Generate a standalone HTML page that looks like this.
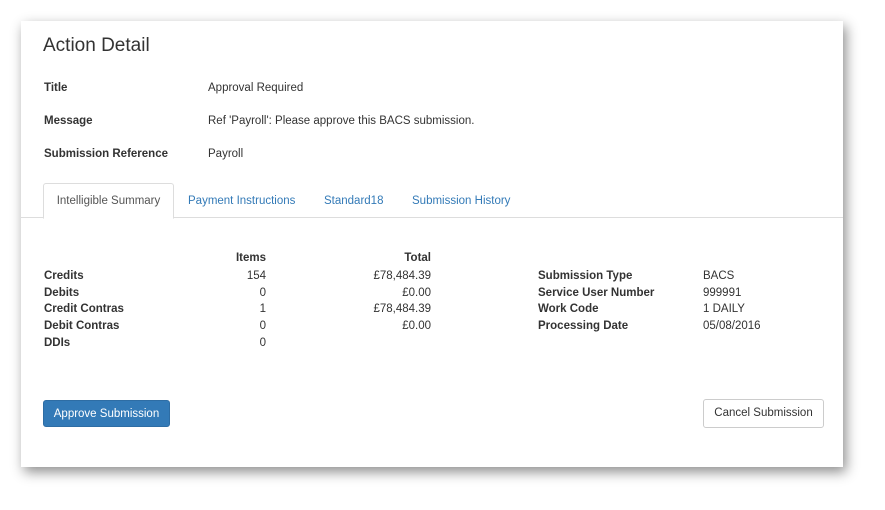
<!DOCTYPE html>
<html><head><style>
body{margin:0;width:885px;height:510px;background:#fff;font-family:"Liberation Sans",sans-serif;position:relative;overflow:hidden}
.card{position:absolute;left:21px;top:21px;width:822px;height:446px;background:#fff;box-shadow:3px 5px 12px rgba(0,0,0,.45)}
.a{position:absolute;font-size:11.5px;color:#333;white-space:nowrap}
.b{font-weight:bold}
.r{text-align:right}
.tab{position:absolute;top:184px;height:35px;line-height:35px;font-size:11.5px;color:#337ab7}
</style></head><body>
<div class="card"></div>
<div class="a" style="left:43px;top:35px;font-size:19px;color:#333">Action Detail</div>
<div class="a b" style="left:44px;top:82px">Title</div>
<div class="a" style="left:208px;top:82px">Approval Required</div>
<div class="a b" style="left:44px;top:115px">Message</div>
<div class="a" style="left:208px;top:115px">Ref 'Payroll': Please approve this BACS submission.</div>
<div class="a b" style="left:44px;top:148px">Submission Reference</div>
<div class="a" style="left:208px;top:148px">Payroll</div>
<div style="position:absolute;left:21px;top:217px;width:822px;height:1px;background:#ddd"></div>
<div class="tab" style="left:43px;width:129px;border:1px solid #ddd;border-bottom-color:#fff;background:#fff;border-radius:3px 3px 0 0;color:#555;text-align:center;top:183px;height:34px">Intelligible Summary</div>
<div class="tab" style="left:188px">Payment Instructions</div>
<div class="tab" style="left:324px">Standard18</div>
<div class="tab" style="left:412px">Submission History</div>
<div class="a b r" style="left:206px;width:60px;top:252px">Items</div>
<div class="a b r" style="left:330px;width:101px;top:252px">Total</div>
<div class="a b" style="left:44px;top:268px;line-height:16.7px">Credits<br>Debits<br>Credit Contras<br>Debit Contras<br>DDIs</div>
<div class="a r" style="left:206px;width:60px;top:268px;line-height:16.7px">154<br>0<br>1<br>0<br>0</div>
<div class="a r" style="left:330px;width:101px;top:268px;line-height:16.7px">£78,484.39<br>£0.00<br>£78,484.39<br>£0.00</div>
<div class="a b" style="left:538px;top:268px;line-height:16.7px">Submission Type<br>Service User Number<br>Work Code<br>Processing Date</div>
<div class="a" style="left:703px;top:268px;line-height:16.7px">BACS<br>999991<br>1 DAILY<br>05/08/2016</div>
<div class="a" style="left:43px;top:400px;width:127px;height:27px;line-height:26px;background:#337ab7;color:#fff;border-radius:3px;text-align:center;border:1px solid #2e6da4;box-sizing:border-box">Approve Submission</div>
<div class="a" style="left:703px;top:399px;width:121px;height:29px;line-height:27px;background:#fff;color:#333;border-radius:3px;text-align:center;border:1px solid #ccc;box-sizing:border-box">Cancel Submission</div>
</body></html>
